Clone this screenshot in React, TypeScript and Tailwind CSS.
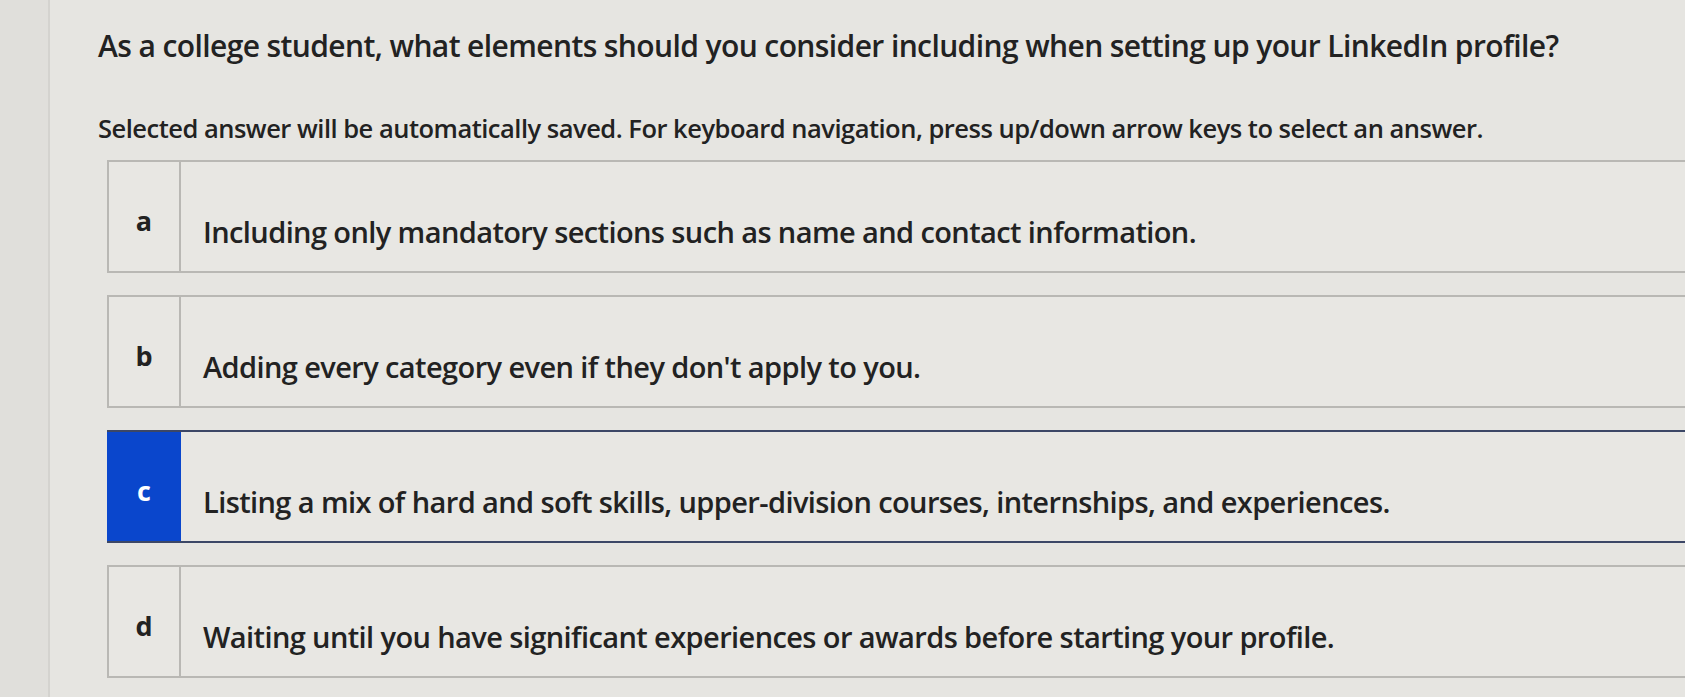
import React from "react";

const options = [
  { key: "a", text: "Including only mandatory sections such as name and contact information.", selected: false },
  { key: "b", text: "Adding every category even if they don't apply to you.", selected: false },
  { key: "c", text: "Listing a mix of hard and soft skills, upper-division courses, internships, and experiences.", selected: true },
  { key: "d", text: "Waiting until you have significant experiences or awards before starting your profile.", selected: false },
];

export default function App() {
  return (
    <div
      className="w-[1685px] h-[697px] overflow-hidden bg-[#e6e5e1] flex text-[#222222]"
      style={{ fontFamily: '"Open Sans", "Noto Sans", sans-serif' }}
    >
      <div className="w-[50px] shrink-0 bg-[#e0dfdb] border-r-2 border-[#d4d3cf]" />
      <div className="flex-1 flex flex-col pl-[48px]">
        <h1 className="mt-[24px] text-[30px] leading-[44px] font-semibold tracking-[-0.6px] whitespace-nowrap">
          As a college student, what elements should you consider including when setting up your LinkedIn profile?
        </h1>
        <p className="mt-[42px] text-[25.5px] leading-[36px] font-semibold tracking-[-0.5px] whitespace-nowrap">
          Selected answer will be automatically saved. For keyboard navigation, press up/down arrow keys to select an answer.
        </p>
        <div className="mt-[14px] ml-[9px] flex flex-col gap-[22px]">
          {options.map((o) => (
            <div
              key={o.key}
              className={
                o.selected
                  ? "h-[113px] flex border-y-2 border-[#3c4766] bg-[#e8e7e3]"
                  : "h-[113px] flex border-y-2 border-l-2 border-[#b9b8b4] bg-[#e8e7e3]"
              }
            >
              <div
                className={
                  o.selected
                    ? "w-[74px] shrink-0 flex items-center justify-center bg-[#0a46cc] text-white text-[27px] font-bold"
                    : "w-[72px] shrink-0 flex items-center justify-center border-r-2 border-[#b9b8b4] text-[27px] font-bold"
                }
              >
                <span className="pt-[10px]">{o.key}</span>
              </div>
              <div className="flex-1 flex items-center pl-[22px] pt-[30px] text-[29px] font-semibold tracking-[-0.6px] whitespace-nowrap">
                {o.text}
              </div>
            </div>
          ))}
        </div>
      </div>
    </div>
  );
}
